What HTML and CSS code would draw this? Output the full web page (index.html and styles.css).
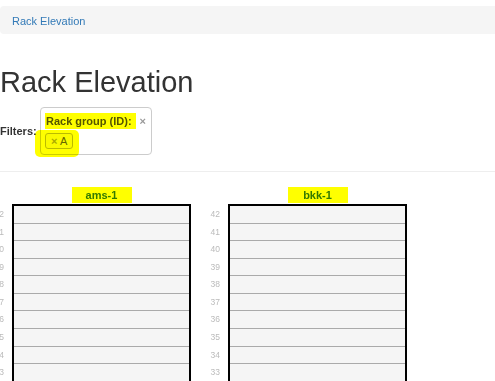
FILE: index.html
```html
<!DOCTYPE html>
<html lang="en">
<head>
    <meta charset="UTF-8">
    <title>Rack Elevation</title>
    <link rel="stylesheet" href="styles.css">
</head>
<body>
    <div class="breadcrumb"><a href="#">Rack Elevation</a></div>
    <h1>Rack Elevation</h1>
    <div class="filters">
        <span class="filters-label">Filters:</span>
        <div class="filter-box">
            <div class="filter-head">
                <span class="hl filter-name">Rack group (ID):</span>
                <span class="remove">&times;</span>
            </div>
            <div class="chip-wrap">
                <span class="chip"><span class="chip-x">&times;</span> A</span>
            </div>
        </div>
    </div>
    <hr>
    <div class="racks">
        <div class="rack-col">
            <div class="rack-name"><a class="hl" href="#">ams-1</a></div>
            <div class="nums">
                <div>42</div><div>41</div><div>40</div><div>39</div><div>38</div><div>37</div>
                <div>36</div><div>35</div><div>34</div><div>33</div><div>32</div><div>31</div>
            </div>
            <div class="rack">
                <div class="unit"></div><div class="unit"></div><div class="unit"></div>
                <div class="unit"></div><div class="unit"></div><div class="unit"></div>
                <div class="unit"></div><div class="unit"></div><div class="unit"></div>
                <div class="unit"></div><div class="unit"></div><div class="unit"></div>
            </div>
        </div>
        <div class="rack-col">
            <div class="rack-name"><a class="hl" href="#">bkk-1</a></div>
            <div class="nums">
                <div>42</div><div>41</div><div>40</div><div>39</div><div>38</div><div>37</div>
                <div>36</div><div>35</div><div>34</div><div>33</div><div>32</div><div>31</div>
            </div>
            <div class="rack">
                <div class="unit"></div><div class="unit"></div><div class="unit"></div>
                <div class="unit"></div><div class="unit"></div><div class="unit"></div>
                <div class="unit"></div><div class="unit"></div><div class="unit"></div>
                <div class="unit"></div><div class="unit"></div><div class="unit"></div>
            </div>
        </div>
    </div>
</body>
</html>
```

FILE: styles.css
```css
body {
    margin: 0;
    font-family: "Liberation Sans", Arial, sans-serif;
    font-size: 11px;
    color: #333;
    background: #fff;
    overflow: hidden;
}
a {
    color: #337ab7;
    text-decoration: none;
}
.breadcrumb {
    margin: 6px -10px 0 0;
    padding: 2px 12px 0;
    line-height: 26px;
    background-color: #f5f5f5;
    border-radius: 4px;
}
h1 {
    margin: 32px 0 9px;
    font-size: 29px;
    font-weight: normal;
    line-height: 32px;
}
.filters {
    display: flex;
    align-items: center;
    gap: 3px;
}
.filters-label {
    font-weight: bold;
    width: 37px;
}
.filter-box {
    width: 112px;
    box-sizing: border-box;
    border: 1px solid #ccc;
    border-radius: 4px;
    padding: 5px 4px;
}
.filter-head {
    display: flex;
    align-items: center;
    line-height: 16px;
}
.filter-name {
    font-weight: bold;
    color: #555;
    padding: 0 4px 0 1px;
}
.remove {
    margin-left: 4px;
    color: #999;
    font-weight: bold;
}
.chip-wrap {
    margin-top: 4px;
    line-height: 14px;
}
.chip {
    position: relative;
    display: inline-block;
    padding: 0 5px;
    border: 1px solid #bbb;
    border-radius: 3px;
    background: #fafafa;
    color: #666;
    font-weight: normal;
}
.chip-x {
    color: #aaa;
    font-weight: bold;
}
/* yellow marker over the screenshot */
.hl {
    position: relative;
}
.hl::after,
.chip::after {
    content: "";
    position: absolute;
    inset: 0;
    background: #ffff00;
    mix-blend-mode: multiply;
}
.chip::after {
    inset: -4px -7px -9px -11px;
    border-radius: 5px;
}
hr {
    margin: 16px 0 0;
    border: 0;
    border-top: 1px solid #eee;
}
.racks {
    display: flex;
    gap: 7px;
    margin-left: -18px;
    padding-top: 15px;
}
.rack-col {
    display: grid;
    grid-template-columns: 30px 179px;
}
.rack-name {
    grid-column: 2;
    text-align: center;
    margin-bottom: 1px;
}
.rack-name a {
    display: inline-block;
    width: 60px;
    line-height: 16px;
    font-weight: bold;
}
.nums {
    padding-top: 2px;
    padding-right: 8px;
    text-align: right;
    font-size: 8.5px;
    color: #bbb;
}
.nums div {
    height: 17.58px;
    line-height: 17.58px;
}
.rack {
    border: 2px solid #000;
}
.unit {
    height: 16.58px;
    background: #f5f5f5;
    border-bottom: 1px solid #aaa;
}
```
